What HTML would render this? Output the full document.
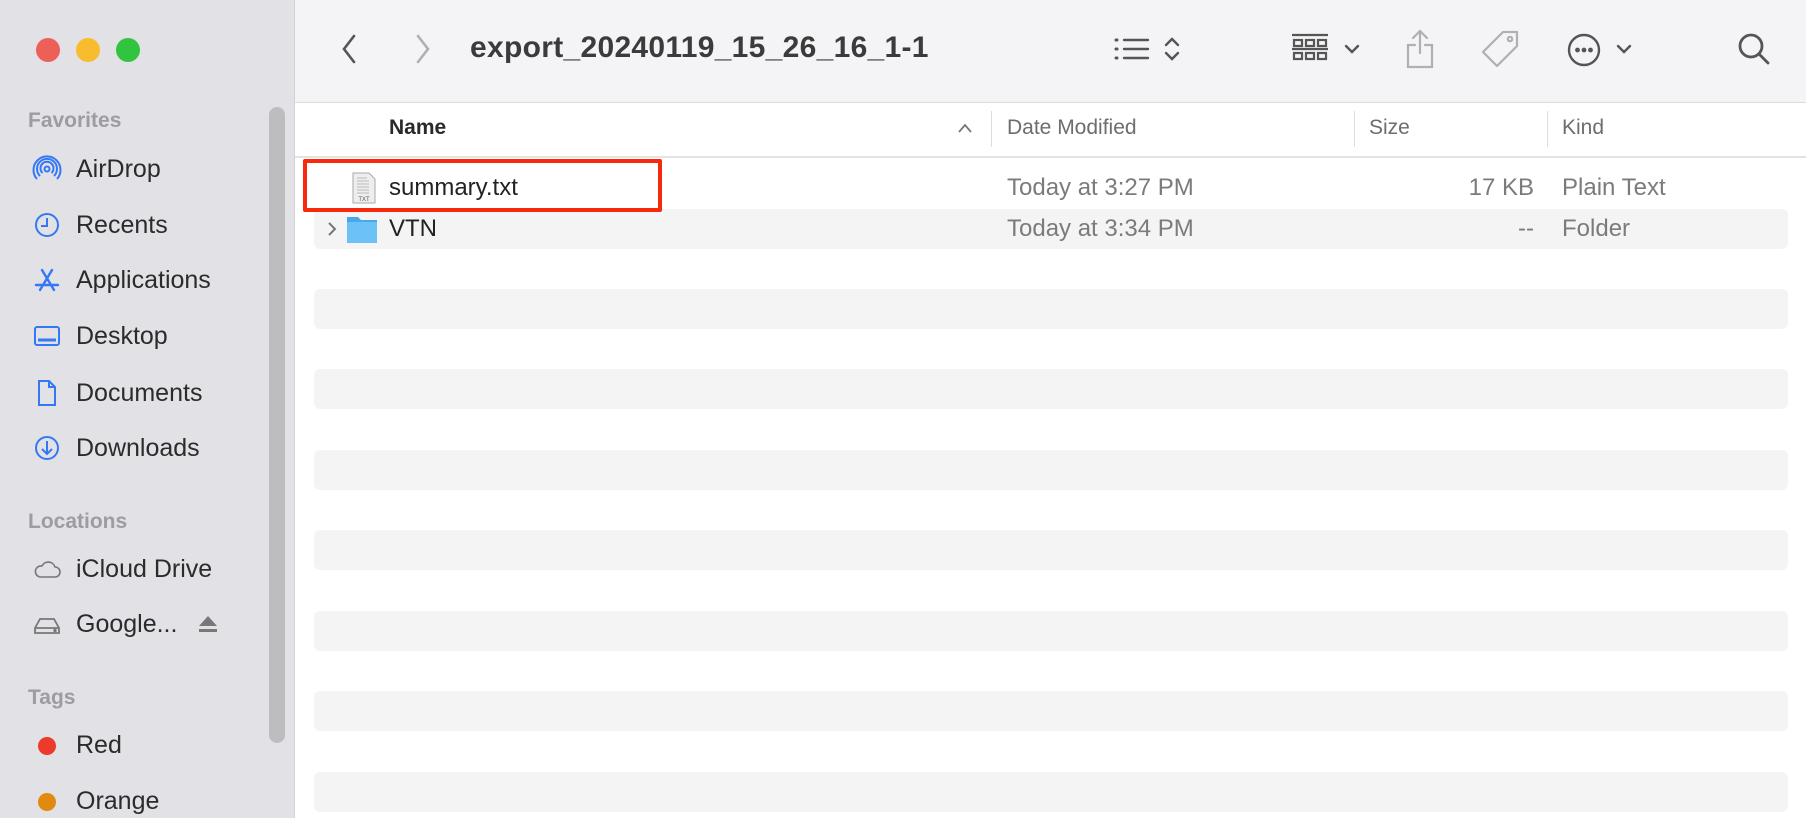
<!DOCTYPE html>
<html><head><meta charset="utf-8"><style>
*{margin:0;padding:0;box-sizing:border-box}
body{width:1806px;height:818px;overflow:hidden;background:#fff;font-family:"Liberation Sans",sans-serif;position:relative}
.a{position:absolute}
.sb{left:0;top:0;width:295px;height:818px;background:#e2e1e5;border-right:1px solid #d4d4d6}
.tb{left:295px;top:0;width:1511px;height:103px;background:#f4f4f6;border-bottom:1px solid #dcdcde}
.sec{left:28px;font-weight:bold;font-size:21px;color:#9d9ca1;line-height:30px;margin-top:-15px}
.it{left:76px;font-size:25px;color:#2b2b2b;line-height:30px;margin-top:-15px}
.ic{left:32px;width:30px;height:30px;margin-top:-15px}
.hd{font-size:21px;color:#6d6d6d;line-height:30px;top:113px}
.row{font-size:24px;line-height:40px;color:#7b7b7b}
.stripe{left:314px;width:1474px;height:40px;background:#f4f4f5;border-radius:6px}
.vs{top:111px;width:1px;height:36px;background:#dedede}
</style></head><body>
<div class="a sb"></div>
<div class="a" style="left:36px;top:38px;width:24px;height:24px;border-radius:50%;background:#ee5f58"></div>
<div class="a" style="left:76px;top:38px;width:24px;height:24px;border-radius:50%;background:#f8bd2e"></div>
<div class="a" style="left:116px;top:38px;width:24px;height:24px;border-radius:50%;background:#30c43f"></div>

<div class="a sec" style="top:121px">Favorites</div>
<svg class="a ic" style="top:169px" viewBox="0 0 30 30" fill="none" stroke="#3478f6" stroke-width="2"><path d="M8 22a10 10 0 1 1 14 0"/><path d="M10.5 19a6.5 6.5 0 1 1 9 0"/><circle cx="15" cy="15" r="2.5"/><path d="M5 25a13.5 13.5 0 1 1 20 0"/></svg>
<div class="a it" style="top:169px">AirDrop</div>
<svg class="a ic" style="top:225px" viewBox="0 0 30 30" fill="none" stroke="#3478f6" stroke-width="2"><circle cx="15" cy="15" r="11"/><path d="M15 8v8h-6"/></svg>
<div class="a it" style="top:225px">Recents</div>
<svg class="a ic" style="top:280px" viewBox="0 0 30 30" fill="none" stroke="#3478f6" stroke-width="2.4" stroke-linecap="round"><path d="M10 5l12 20M20 5L8 25M4 20h22"/></svg>
<div class="a it" style="top:280px">Applications</div>
<svg class="a ic" style="top:336px" viewBox="0 0 30 30" fill="none" stroke="#3478f6" stroke-width="2"><rect x="3" y="6" width="24" height="18" rx="2"/><path d="M6 19h18" stroke-width="3"/></svg>
<div class="a it" style="top:336px">Desktop</div>
<svg class="a ic" style="top:393px" viewBox="0 0 30 30" fill="none" stroke="#3478f6" stroke-width="2"><path d="M7 3h10l6 6v18H7z"/><path d="M17 3v6h6"/></svg>
<div class="a it" style="top:393px">Documents</div>
<svg class="a ic" style="top:448px" viewBox="0 0 30 30" fill="none" stroke="#3478f6" stroke-width="2"><circle cx="15" cy="15" r="11"/><path d="M15 8v13M10 16l5 5 5-5"/></svg>
<div class="a it" style="top:448px">Downloads</div>

<div class="a sec" style="top:522px">Locations</div>
<svg class="a ic" style="top:569px" viewBox="0 0 30 30" fill="none" stroke="#777" stroke-width="1.6"><path d="M8 23h15a5 5 0 0 0 0-10 7 7 0 0 0-13-1 5.5 5.5 0 0 0-2 11z"/></svg>
<div class="a it" style="top:569px">iCloud Drive</div>
<svg class="a ic" style="top:624px" viewBox="0 0 30 30" fill="none" stroke="#777" stroke-width="1.8"><path d="M3 19l5-9h14l5 9v5H3z M3 19h24"/><circle cx="23" cy="21.5" r="0.8" fill="#777"/></svg>
<div class="a it" style="top:624px">Google...</div>
<svg class="a" style="left:196px;top:613px" width="24" height="22" viewBox="0 0 24 22" fill="#777"><path d="M12 3l9 10H3z"/><rect x="3" y="16" width="18" height="3"/></svg>

<div class="a sec" style="top:698px">Tags</div>
<div class="a" style="left:38px;top:737px;width:18px;height:18px;border-radius:50%;background:#ec3a2c"></div>
<div class="a it" style="top:745px">Red</div>
<div class="a" style="left:38px;top:793px;width:18px;height:18px;border-radius:50%;background:#e08a10"></div>
<div class="a it" style="top:801px">Orange</div>
<div class="a" style="left:269px;top:107px;width:16px;height:636px;border-radius:8px;background:#bdbdbf"></div>

<div class="a tb"></div>
<svg class="a" style="left:337px;top:33px" width="24" height="32" viewBox="0 0 24 32" fill="none" stroke="#555" stroke-width="2.6" stroke-linecap="round"><path d="M17 3L7 16l10 13"/></svg>
<svg class="a" style="left:411px;top:33px" width="24" height="32" viewBox="0 0 24 32" fill="none" stroke="#b0b0b0" stroke-width="2.6" stroke-linecap="round"><path d="M7 3l10 13-10 13"/></svg>
<div class="a" style="left:470px;top:30px;font-size:30px;letter-spacing:0.3px;font-weight:bold;color:#3b3b3b;line-height:36px">export_20240119_15_26_16_1-1</div>
<svg class="a" style="left:1113px;top:34px" width="40" height="30" viewBox="0 0 40 30" fill="none" stroke="#555" stroke-width="2.4" stroke-linecap="round"><path d="M11 6h24M11 15h24M11 24h24"/><path d="M3 6h1M3 15h1M3 24h1" stroke-width="3"/></svg>
<svg class="a" style="left:1162px;top:34px" width="20" height="30" viewBox="0 0 20 30" fill="none" stroke="#555" stroke-width="2.4" stroke-linecap="round"><path d="M4 11l6-6 6 6M4 19l6 6 6-6"/></svg>
<svg class="a" style="left:1291px;top:32px" width="38" height="34" viewBox="0 0 38 34" fill="none" stroke="#555" stroke-width="2.2"><path d="M1 3h36M1 17h36"/><rect x="3" y="8" width="8" height="6"/><rect x="15" y="8" width="8" height="6"/><rect x="27" y="8" width="8" height="6"/><rect x="3" y="21" width="8" height="6"/><rect x="15" y="21" width="8" height="6"/><rect x="27" y="21" width="8" height="6"/></svg>
<svg class="a" style="left:1343px;top:42px" width="18" height="14" viewBox="0 0 18 14" fill="none" stroke="#555" stroke-width="2.4" stroke-linecap="round"><path d="M3 4l6 6 6-6"/></svg>
<svg class="a" style="left:1404px;top:28px" width="32" height="42" viewBox="0 0 32 42" fill="none" stroke="#b0b0b0" stroke-width="2.2" stroke-linecap="round"><path d="M16 3v22M9 10l7-7 7 7"/><path d="M11 17H4v22h24V17h-7"/></svg>
<svg class="a" style="left:1479px;top:28px" width="42" height="42" viewBox="0 0 42 42" fill="none" stroke="#b0b0b0" stroke-width="2.2" stroke-linejoin="round"><path d="M24 4h14v14L18 38 4 24z"/><circle cx="31" cy="11" r="2.2"/></svg>
<svg class="a" style="left:1566px;top:32px" width="36" height="36" viewBox="0 0 36 36" fill="none" stroke="#555" stroke-width="2.4"><circle cx="18" cy="18" r="15"/><circle cx="11.5" cy="18" r="1.2" fill="#555"/><circle cx="18" cy="18" r="1.2" fill="#555"/><circle cx="24.5" cy="18" r="1.2" fill="#555"/></svg>
<svg class="a" style="left:1615px;top:42px" width="18" height="14" viewBox="0 0 18 14" fill="none" stroke="#555" stroke-width="2.4" stroke-linecap="round"><path d="M3 4l6 6 6-6"/></svg>
<svg class="a" style="left:1736px;top:31px" width="36" height="36" viewBox="0 0 36 36" fill="none" stroke="#555" stroke-width="2.8" stroke-linecap="round"><circle cx="15" cy="15" r="11"/><path d="M23 23l9 9"/></svg>

<div class="a hd" style="left:389px;font-weight:bold;color:#2a2a2a">Name</div>
<svg class="a" style="left:957px;top:122px" width="16" height="12" viewBox="0 0 16 12" fill="none" stroke="#777" stroke-width="1.8"><path d="M2 10l6-7 6 7"/></svg>
<div class="a vs" style="left:991px"></div>
<div class="a hd" style="left:1007px">Date Modified</div>
<div class="a vs" style="left:1354px"></div>
<div class="a hd" style="left:1369px">Size</div>
<div class="a vs" style="left:1547px"></div>
<div class="a hd" style="left:1562px">Kind</div>
<div class="a" style="left:295px;top:156px;width:1511px;height:2px;background:#e3e3e3"></div>

<div class="a stripe" style="top:209px"></div>
<div class="a stripe" style="top:289px"></div>
<div class="a stripe" style="top:369px"></div>
<div class="a stripe" style="top:450px"></div>
<div class="a stripe" style="top:530px"></div>
<div class="a stripe" style="top:611px"></div>
<div class="a stripe" style="top:691px"></div>
<div class="a stripe" style="top:772px"></div>

<svg class="a" style="left:351px;top:172px" width="26" height="32" viewBox="0 0 26 32"><path d="M2 1h16l6 6v24H2z" fill="#eee" stroke="#aaa"/><path d="M6 6h10M6 9h12M6 12h12M6 15h12M6 18h12M6 21h12" stroke="#bbb"/><text x="13" y="29" font-size="6" text-anchor="middle" fill="#555" font-family="Liberation Sans">TXT</text></svg>
<div class="a row" style="left:389px;top:168px;color:#222">summary.txt</div>
<div class="a row" style="left:1007px;top:168px">Today at 3:27 PM</div>
<div class="a row" style="left:1380px;top:168px;width:154px;text-align:right">17 KB</div>
<div class="a row" style="left:1562px;top:168px">Plain Text</div>
<div class="a" style="left:303px;top:159px;width:359px;height:53px;border:4px solid #f6290d;border-radius:2px"></div>

<svg class="a" style="left:326px;top:219px" width="12" height="20" viewBox="0 0 12 20" fill="none" stroke="#777" stroke-width="2"><path d="M3 4l6 6-6 6"/></svg>
<svg class="a" style="left:346px;top:214px" width="32" height="30" viewBox="0 0 32 30"><path d="M1 3h11l3 3h16v23H1z" fill="#4aa8e8"/><rect x="1" y="8" width="30" height="21" rx="1" fill="#6cc2f5"/></svg>
<div class="a row" style="left:389px;top:209px;color:#222">VTN</div>
<div class="a row" style="left:1007px;top:209px">Today at 3:34 PM</div>
<div class="a row" style="left:1380px;top:209px;width:154px;text-align:right">--</div>
<div class="a row" style="left:1562px;top:209px">Folder</div>
</body></html>
